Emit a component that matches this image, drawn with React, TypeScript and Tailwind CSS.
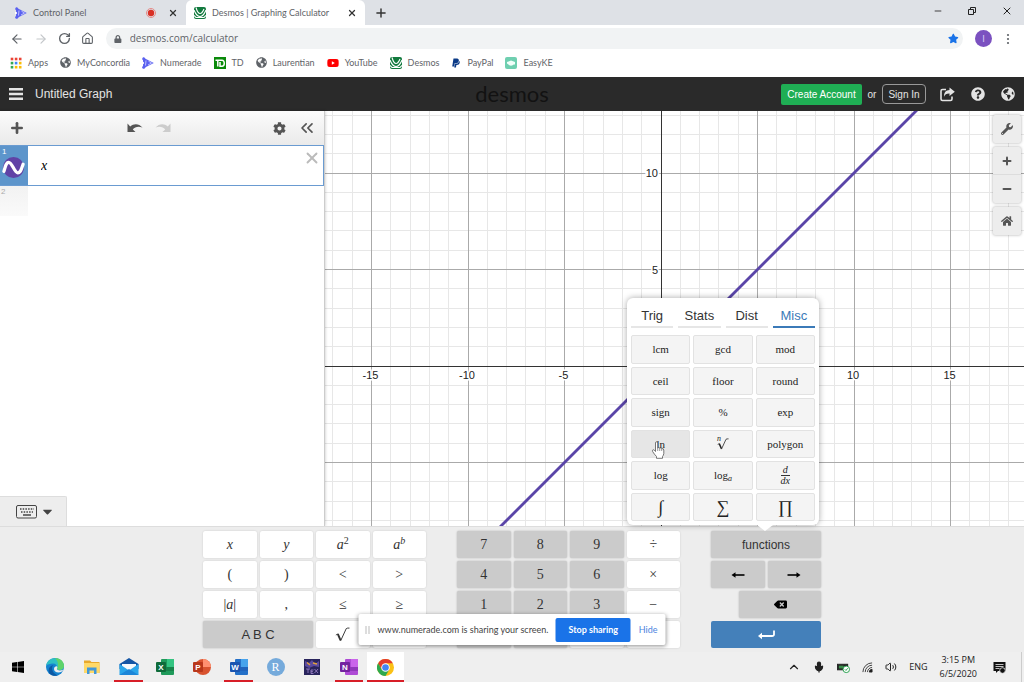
import type { ReactNode } from "react";
import { ArrowLeft, ArrowRight, ChevronUp, ChevronsLeft, Home, Mic, Minus, Plus, RotateCw, Volume2, X } from "lucide-react";
import { FaBackspace, FaCaretDown, FaCog, FaGlobeAmericas, FaHome, FaLock, FaPaypal, FaQuestionCircle, FaStar, FaWrench, FaYoutube } from "react-icons/fa";

const uiFont = "font-['Lato',sans-serif]";
const addressFont = "font-['Open_Sans',sans-serif]";
const sansFont = "font-['Liberation_Sans',sans-serif]";
const serifFont = "font-['Liberation_Serif',serif]";

const lightKey = "flex items-center justify-center rounded-xs bg-white text-[#333] shadow-[0_0_2px_rgba(0,0,0,0.15)]";
const darkKey = "flex items-center justify-center rounded-xs bg-[#cbcbcb] text-[#333] shadow-[0_0_2px_rgba(0,0,0,0.25)]";
const toolButton = "flex h-7 w-7 items-center justify-center text-[#555]";

function NumeradeIcon() {
  return (
    <svg className="h-3 w-3" viewBox="0 0 12 12" aria-hidden="true">
      <path d="M1 0.500 11.800 6 1 11.500z" fill="#5b62f0" />
      <path d="M4 3.500 3.500 8.500M6.500 4.200 9.500 6 6 8" fill="none" stroke="#d5d7ff" strokeWidth="0.800" />
      <circle cx="1.700" cy="1.700" r="1.500" fill="#5b62f0" />
      <circle cx="1.700" cy="10.300" r="1.500" fill="#5b62f0" />
      <circle cx="0.800" cy="6" r="1.200" fill="#fff" />
    </svg>
  );
}

function DesmosIcon() {
  return (
    <svg className="h-3 w-3" viewBox="0 0 12 12" aria-hidden="true">
      <rect width="12" height="12" rx="2" fill="#127a3e" />
      <path d="M0 3C1.500 7 3 9.500 6 9.500S10.500 7 12 3M2 0.500C3 4 4 6.500 6 6.500S9 4.500 10 2M0 8.500 2 10.500H10L12 8.500" fill="none" stroke="#fff" strokeWidth="1.100" />
    </svg>
  );
}

function AppsIcon() {
  const colors = ["#ea4335", "#ea4335", "#ea4335", "#34a853", "#4285f4", "#fbbc05", "#34a853", "#fbbc05", "#fbbc05"];
  return (
    <svg className="h-3 w-3" viewBox="0 0 12 12" aria-hidden="true">
      {colors.map((color, i) => (
        <rect key={i} x={0.7 + (i % 3) * 4.1} y={0.7 + Math.floor(i / 3) * 4.1} width="2.6" height="2.6" fill={color} />
      ))}
    </svg>
  );
}

function TdIcon() {
  return (
    <svg className="h-3 w-3" viewBox="0 0 12 12" aria-hidden="true">
      <rect width="12" height="12" fill="#0a8a0a" />
      <path d="M1.500 3.200H6.500M3.800 3.200V9.500M6 5V9.200H8C11 9.200 11 3.200 8 3.200H6.500" fill="none" stroke="#fff" strokeWidth="1.500" />
    </svg>
  );
}

function EasyIcon() {
  return (
    <svg className="h-3 w-3" viewBox="0 0 12 12" aria-hidden="true">
      <rect width="12" height="12" rx="2" fill="#6fcfb0" />
      <path d="M2 5 6 3.500 10 5V7.500H8.500C8 9 4 9 3.500 7.500L2 6.500z" fill="#f2fffa" />
    </svg>
  );
}

const bookmarks: { label: string; icon: ReactNode }[] = [
  { label: "Apps", icon: <AppsIcon /> },
  { label: "MyConcordia", icon: <FaGlobeAmericas className="h-[11px] w-[11px] text-[#5f6368]" /> },
  { label: "Numerade", icon: <NumeradeIcon /> },
  { label: "TD", icon: <TdIcon /> },
  { label: "Laurentian", icon: <FaGlobeAmericas className="h-[11px] w-[11px] text-[#5f6368]" /> },
  { label: "YouTube", icon: <FaYoutube className="h-3 w-3 text-[#f00]" /> },
  { label: "Desmos", icon: <DesmosIcon /> },
  { label: "PayPal", icon: <FaPaypal className="h-[10px] w-[10px] text-[#0b3a86]" /> },
  { label: "EasyKE", icon: <EasyIcon /> },
];

function BrowserChrome() {
  return (
    <div className={`${uiFont} shrink-0 bg-white text-[9px] text-[#5f6368]`}>
      <div className="flex h-[25px] items-stretch bg-[#dee1e6]">
        <div className="flex w-[186px] items-center pl-[15px] pr-2">
          <NumeradeIcon />
          <button type="button" className="ml-[6px]">Control Panel</button>
          <svg className="ml-auto mr-3 h-[10px] w-[10px]" viewBox="0 0 10 10" aria-hidden="true">
            <circle cx="5" cy="5" r="4.500" fill="none" stroke="#e58b88" />
            <circle cx="5" cy="5" r="3.200" fill="#d93025" />
          </svg>
          <button type="button" aria-label="Close Control Panel"><X className="h-[10px] w-[10px] text-[#333]" strokeWidth={3} /></button>
        </div>
        <div className="flex w-[179px] items-center rounded-t-md bg-white pl-2 pr-2">
          <DesmosIcon />
          <button type="button" className="ml-[6px] whitespace-nowrap">Desmos | Graphing Calculator</button>
          <button type="button" className="ml-auto" aria-label="Close Desmos"><X className="h-[10px] w-[10px] text-[#333]" strokeWidth={3} /></button>
        </div>
        <button type="button" className="ml-[9px]" aria-label="New tab"><Plus className="h-[14px] w-[14px] text-[#333]" strokeWidth={2.5} /></button>
        <div className="ml-auto flex items-center gap-6 pb-1 pr-[11px] text-[#222]">
          <button type="button" aria-label="Minimize"><Minus className="h-[10px] w-[10px]" /></button>
          <button type="button" aria-label="Restore">
            <svg className="h-[10px] w-[10px]" viewBox="0 0 10 10" fill="none" stroke="currentColor">
              <path d="M1.500 3.500h5v5h-5zM3.500 3.500V1.500h5v5h-2" />
            </svg>
          </button>
          <button type="button" aria-label="Close window"><X className="h-3 w-3" strokeWidth={2} /></button>
        </div>
      </div>

      <div className="flex h-[27px] items-center gap-3 pl-[10px] pr-3">
        <div className="flex items-center gap-[10px]">
          <button type="button" aria-label="Back"><ArrowLeft className="h-[14px] w-[14px]" /></button>
          <button type="button" aria-label="Forward"><ArrowRight className="h-[14px] w-[14px] text-[#c4c7ca]" /></button>
          <button type="button" aria-label="Reload"><RotateCw className="h-[13px] w-[13px]" strokeWidth={2.5} /></button>
          <button type="button" aria-label="Home"><Home className="h-[13px] w-[13px]" /></button>
        </div>
        <div className="flex h-[21px] grow items-center rounded-full bg-[#f1f3f4] pl-2 pr-1">
          <FaLock className="h-2 w-2" />
          <input
            aria-label="Address"
            className={`${addressFont} ml-2 w-full bg-transparent text-[10px] text-[#5f6368] outline-none`}
            defaultValue="desmos.com/calculator"
          />
          <FaStar className="h-[11px] w-[11px] text-[#1a73e8]" />
        </div>
        <button type="button" className="flex h-[17px] w-[17px] items-center justify-center rounded-full bg-[#7b51c0] text-[#d9c9f2]">I</button>
        <button type="button" aria-label="Menu">
          <svg className="h-3 w-2" viewBox="0 0 8 12" fill="currentColor">
            <circle cx="4" cy="2" r="1.100" />
            <circle cx="4" cy="6" r="1.100" />
            <circle cx="4" cy="10" r="1.100" />
          </svg>
        </button>
      </div>

      <nav className="flex h-[25px] items-center gap-3 pb-1 pl-[10px]">
        {bookmarks.map((item) => (
          <a key={item.label} href="#" className="flex items-center gap-[6px]">
            {item.icon}
            {item.label}
          </a>
        ))}
      </nav>
    </div>
  );
}

function ShareIcon() {
  return (
    <svg className="h-[15px] w-[15px]" viewBox="0 0 15 15" aria-hidden="true">
      <path d="M6 2.500H2.500Q1 2.500 1 4V12Q1 13.500 2.500 13.500H10.500Q12 13.500 12 12V9.500" fill="none" stroke="currentColor" strokeWidth="1.600" />
      <path d="M9.500 0.500 14.800 4.700 9.500 8.900V6.400C6.500 6.300 5 7.300 4 9.800 3.800 5.500 6 3.100 9.500 3z" fill="currentColor" />
    </svg>
  );
}

function DesmosHeader() {
  return (
    <header className={`${sansFont} flex h-[34px] shrink-0 items-center bg-[#2a2a2a] text-[10px] text-[#e4e4e4]`}>
      <div className="flex flex-1 items-center gap-3 pl-[9px]">
        <button type="button" aria-label="Menu">
          <svg className="h-3 w-[14px]" viewBox="0 0 14 12" fill="currentColor">
            <path d="M0 0H14V2.400H0zM0 4.800H14V7.200H0zM0 9.600H14V12H0z" />
          </svg>
        </button>
        <h1 className="text-[12px]">Untitled Graph</h1>
      </div>
      <div className="font-['Lato',sans-serif] text-[22px] leading-none text-[#121212]">desmos</div>
      <div className="flex flex-1 items-center justify-end pr-[9px]">
        <button type="button" className="h-[21px] w-[81px] rounded-xs bg-[#1fae54] text-white">Create Account</button>
        <span className="w-5 text-center">or</span>
        <button type="button" className="h-5 w-[44px] rounded-sm border border-[#999]">Sign In</button>
        <div className="ml-[14px] flex items-center gap-4">
          <button type="button" aria-label="Share"><ShareIcon /></button>
          <button type="button" aria-label="Help"><FaQuestionCircle className="h-[14px] w-[14px]" /></button>
          <button type="button" aria-label="Language"><FaGlobeAmericas className="h-[14px] w-[14px]" /></button>
        </div>
      </div>
    </header>
  );
}

function CurvedArrow({ className }: { className: string }) {
  return (
    <svg className={className} viewBox="0 0 16 10" fill="currentColor" aria-hidden="true">
      <path d="M0.500 0.500V9H8.500L5.800 6.400C8 4 11 3 15.500 4.500 12 0.500 7 0 3.200 3.500z" />
    </svg>
  );
}

function ExpressionPanel() {
  return (
    <aside className="z-10 flex w-[325px] shrink-0 flex-col border-r border-[#ccc] bg-white shadow-[0_0_3px_rgba(0,0,0,0.25)]">
      <div className="flex h-[34px] items-center bg-linear-to-b from-[#fcfcfc] to-[#eaeaea] pl-[9px] pr-[7px] text-[#555]">
        <button type="button" aria-label="Add item"><Plus className="h-4 w-4" strokeWidth={4} /></button>
        <div className="ml-auto flex gap-3">
          <button type="button" aria-label="Undo"><CurvedArrow className="h-[10px] w-4" /></button>
          <button type="button" aria-label="Redo"><CurvedArrow className="h-[10px] w-4 -scale-x-100 text-[#ccc]" /></button>
        </div>
        <div className="ml-auto flex items-center gap-[11px]">
          <button type="button" aria-label="Edit list"><FaCog className="h-[13px] w-[13px]" /></button>
          <button type="button" aria-label="Hide list"><ChevronsLeft className="h-5 w-5" /></button>
        </div>
      </div>

      <div className="flex h-[41px] border border-l-0 border-[#6a9bd1]">
        <div className={`${sansFont} w-7 shrink-0 bg-[#5d95cb] pl-[2px] pt-px text-[8px] leading-[10px] text-white`}>
          1
          <button type="button" className="block" aria-label="Hide curve">
            <svg className="h-[23px] w-[23px]" viewBox="0 0 24 24">
              <circle cx="12" cy="11" r="11" fill="#6042a6" />
              <path d="M2 15C3.500 9.500 4.500 5.500 7 5.500 10.500 5.500 13 16.500 16.500 16.500 19.500 16.500 20.500 12 22 7.500" fill="none" stroke="#fff" strokeWidth="3.400" strokeLinecap="round" />
            </svg>
          </button>
        </div>
        <input aria-label="Expression 1" className={`${serifFont} min-w-0 grow pl-[13px] text-[14px] italic text-black outline-none`} defaultValue="x" />
        <button type="button" className="self-start pr-[2px] pt-[3px]" aria-label="Delete expression">
          <X className="h-[18px] w-[18px] text-[#bbb]" strokeWidth={2.5} />
        </button>
      </div>
      <div className={`${sansFont} h-[30px] w-7 bg-linear-to-b from-[#f2f2f2] to-[#fafafa] pl-px pt-px text-[8px] leading-[10px] text-[#aaa]`}>2</div>

      <button
        type="button"
        className="mt-auto flex h-[30px] w-[67px] items-center justify-center gap-[3px] rounded-tr-xs border-r border-t border-[#ddd] bg-[#ededed] pl-1 text-[#444]"
        aria-label="Toggle keypad"
      >
        <svg className="h-[14px] w-[21px]" viewBox="0 0 21 14" fill="none" stroke="currentColor" aria-hidden="true">
          <rect x="0.500" y="0.500" width="20" height="12.500" rx="1.500" />
          <path d="M4 4H18M5 7H17" strokeWidth="1.500" strokeDasharray="1.500 1.200" />
          <path d="M7 10H15" strokeWidth="1.500" />
        </svg>
        <FaCaretDown className="h-[15px] w-[15px]" />
      </button>
    </aside>
  );
}

const originX = 336;
const originY = 255;
const unit = 19.3;

function GraphPaper() {
  const steps = Array.from({ length: 81 }, (_, i) => i - 40);
  const lineColor = (n: number) => (n === 0 ? "#333" : n % 5 === 0 ? "#aaa" : "#e7e7e7");
  const ordered = [...steps.filter((n) => n % 5 !== 0), ...steps.filter((n) => n % 5 === 0 && n !== 0), 0];

  return (
    <svg className="h-full w-full" viewBox="0 0 699 415" preserveAspectRatio="xMidYMid slice" role="img" aria-label="Graph of y = x">
      <g shapeRendering="crispEdges">
        {ordered.map((n) => (
          <g key={n} stroke={lineColor(n)}>
            <line x1={originX + n * unit} x2={originX + n * unit} y1="-500" y2="1000" />
            <line y1={originY - n * unit} y2={originY - n * unit} x1="-500" x2="1300" />
          </g>
        ))}
      </g>
      <line x1={originX - 40 * unit} y1={originY + 40 * unit} x2={originX + 40 * unit} y2={originY - 40 * unit} stroke="#5a45a8" strokeWidth="2.800" />
      <g className={`${sansFont} text-[11px]`} fill="#222" stroke="#fff" strokeWidth="3" paintOrder="stroke" textAnchor="middle">
        {[-15, -10, -5, 10, 15].map((n) => (
          <text key={n} x={originX + n * unit - 1} y={originY + 13}>{n}</text>
        ))}
        {[5, 10].map((n) => (
          <text key={n} x={originX - 3} y={originY - n * unit + 4} textAnchor="end">{n}</text>
        ))}
      </g>
    </svg>
  );
}

function GraphArea() {
  return (
    <main className="relative min-w-0 flex-1 overflow-hidden bg-white">
      <div className="absolute inset-0">
        <GraphPaper />
      </div>
      <div className="absolute right-[3px] top-1 flex flex-col gap-1 *:rounded-xs *:bg-[#ededed] *:shadow-[0_0_3px_rgba(0,0,0,0.35)]">
        <div><button type="button" className={toolButton} aria-label="Graph settings"><FaWrench className="h-3 w-3" /></button></div>
        <div className="divide-y divide-[#ddd]">
          <button type="button" className={toolButton} aria-label="Zoom in"><Plus className="h-3 w-3" strokeWidth={4} /></button>
          <button type="button" className={toolButton} aria-label="Zoom out"><Minus className="h-3 w-3" strokeWidth={4} /></button>
        </div>
        <div><button type="button" className={toolButton} aria-label="Default viewport"><FaHome className="h-3 w-3" /></button></div>
      </div>
    </main>
  );
}

function Radical({ className }: { className: string }) {
  return (
    <svg className={className} viewBox="0 0 14 14" fill="none" stroke="currentColor" strokeLinejoin="round" aria-hidden="true">
      <path d="M0.800 7.500 2.600 6.500" strokeWidth="0.800" />
      <path d="M2.600 6.500 5.200 12.500" strokeWidth="1.800" />
      <path d="M5.200 13 10.500 1.500Q11.500 0.800 13.500 1" strokeWidth="0.900" />
    </svg>
  );
}

const miscFunctions: { name: string; label: ReactNode }[] = [
  { name: "lcm", label: "lcm" },
  { name: "gcd", label: "gcd" },
  { name: "mod", label: "mod" },
  { name: "ceil", label: "ceil" },
  { name: "floor", label: "floor" },
  { name: "round", label: "round" },
  { name: "sign", label: "sign" },
  { name: "percent", label: "%" },
  { name: "exp", label: "exp" },
  { name: "ln", label: "ln" },
  {
    name: "nth root",
    label: (
      <span className="flex items-start">
        <span className="-mr-1 -mt-1 text-[8px] italic leading-[10px]">n</span>
        <Radical className="h-3 w-3" />
      </span>
    ),
  },
  { name: "polygon", label: "polygon" },
  { name: "log", label: "log" },
  { name: "log base a", label: <span>log<sub className="text-[8px] italic">a</sub></span> },
  {
    name: "derivative",
    label: (
      <span className="flex flex-col items-center text-[10px] italic leading-[10px]">
        <span className="border-b border-[#333] px-[2px]">d</span>
        <span>dx</span>
      </span>
    ),
  },
  { name: "integral", label: <span className="text-[18px] leading-none">∫</span> },
  { name: "sum", label: <span className="text-[18px] leading-none">∑</span> },
  { name: "product", label: <span className="text-[18px] leading-none">∏</span> },
];

function HandCursor() {
  return (
    <svg className="absolute left-[19px] top-[10px] h-[18px] w-[15px]" viewBox="0 0 15 18" aria-hidden="true">
      <path
        d="M4.500 10.500V2Q4.500 0.800 5.600 0.800T6.700 2V7Q7.700 6 8.700 7.200 9.800 6.400 10.700 7.700 12.500 7 12.800 9V12.500Q12.500 14.500 11.500 15.500V17.300H5.500V15.500Q3.500 13.500 1.600 10.500 1 9 2.200 8.700 3.300 8.700 4.500 10.500z"
        fill="#fff"
        stroke="#555"
        strokeWidth="0.800"
      />
      <path d="M6.700 7V10M8.700 7.500V10M10.700 8V10" stroke="#555" strokeWidth="0.600" />
    </svg>
  );
}

function FunctionsPopup() {
  return (
    <div className="absolute bottom-full right-[2px] z-20 mb-[6px] w-[192px] rounded-md bg-white px-1 pb-1 shadow-[0_0_6px_rgba(0,0,0,0.35)]">
      <div className={`${sansFont} grid grid-cols-4 gap-[5px] pt-1 text-[13px] text-[#333]`} role="tablist">
        {["Trig", "Stats", "Dist", "Misc"].map((tab) => (
          <button
            key={tab}
            type="button"
            role="tab"
            aria-selected={tab === "Misc"}
            className="h-[26px] border-b-2 border-[#e6e6e6] pt-[2px] leading-none aria-selected:border-[#3b7ab8] aria-selected:text-[#3b7ab8]"
          >
            {tab}
          </button>
        ))}
      </div>
      <div className={`${serifFont} mt-[7px] grid h-[186px] grid-cols-3 grid-rows-6 gap-[3px] text-[11px] text-[#222]`}>
        {miscFunctions.map((item) => (
          <button
            key={item.name}
            type="button"
            aria-label={item.name}
            className={`relative flex min-h-0 items-center justify-center rounded-xs border border-[#e2e2e2] ${item.name === "ln" ? "bg-[#e6e6e6]" : "bg-[#f4f4f4]"}`}
          >
            {item.label}
            {item.name === "ln" && <HandCursor />}
          </button>
        ))}
      </div>
      <svg className="absolute right-[46px] top-full h-[6px] w-4" viewBox="0 0 16 6" aria-hidden="true">
        <path d="M0 0H16L8 6z" fill="#fff" />
      </svg>
    </div>
  );
}

const leftKeys: { name: string; label: ReactNode }[] = [
  { name: "x", label: <i>x</i> },
  { name: "y", label: <i>y</i> },
  { name: "a squared", label: <span><i>a</i><sup className="text-[10px]">2</sup></span> },
  { name: "a to the b", label: <i>a<sup className="text-[10px]">b</sup></i> },
  { name: "left parenthesis", label: "(" },
  { name: "right parenthesis", label: ")" },
  { name: "less than", label: "<" },
  { name: "greater than", label: ">" },
  { name: "absolute value", label: <span>|<i>a</i>|</span> },
  { name: "comma", label: "," },
  { name: "less than or equal", label: "≤" },
  { name: "greater than or equal", label: "≥" },
];

const numberKeys = ["7", "8", "9", "÷", "4", "5", "6", "×", "1", "2", "3", "−"];

function KeyArrow({ flip }: { flip?: boolean }) {
  return (
    <svg className={`h-2 w-[14px] ${flip ? "-scale-x-100" : ""}`} viewBox="0 0 14 8" aria-hidden="true">
      <path d="M3 4H13.500" stroke="#000" strokeWidth="1.600" />
      <path d="M0.500 4 4.500 1.300V6.700z" fill="#000" />
    </svg>
  );
}

function Keypad() {
  return (
    <section className="relative z-10 flex shrink-0 justify-center gap-[31px] border-t border-[#ddd] bg-[#ededed] pb-1 pt-1">
      <div className={`${serifFont} grid w-[223px] auto-rows-[27px] grid-cols-4 gap-[3px] text-[14px]`}>
        {leftKeys.map((key) => (
          <button key={key.name} type="button" className={lightKey} aria-label={key.name}>{key.label}</button>
        ))}
        <button type="button" className={`${darkKey} ${sansFont} col-span-2 text-[13px]`}>A B C</button>
        <button type="button" className={lightKey} aria-label="square root"><Radical className="h-[15px] w-[15px]" /></button>
        <button type="button" className={lightKey} aria-label="pi" />
      </div>
      <div className={`${serifFont} grid w-[223px] auto-rows-[27px] grid-cols-4 gap-[3px] text-[14px]`}>
        {numberKeys.map((key, i) => (
          <button key={key} type="button" className={i % 4 === 3 ? lightKey : darkKey}>{key}</button>
        ))}
        <button type="button" className={darkKey} aria-label="0" />
        <button type="button" className={darkKey} aria-label="decimal point" />
        <button type="button" className={lightKey} aria-label="equals" />
        <button type="button" className={lightKey} aria-label="plus" />
      </div>
      <div className={`${sansFont} relative grid w-[110px] auto-rows-[27px] grid-cols-4 gap-[3px] text-[12px]`}>
        <button type="button" className={`${darkKey} col-span-4`}>functions</button>
        <button type="button" className={`${darkKey} col-span-2`} aria-label="Left"><KeyArrow /></button>
        <button type="button" className={`${darkKey} col-span-2`} aria-label="Right"><KeyArrow flip /></button>
        <button type="button" className={`${darkKey} col-span-3 col-start-2`} aria-label="Backspace">
          <FaBackspace className="h-[13px] w-[13px] text-black" />
        </button>
        <button type="button" className="col-span-4 flex items-center justify-center rounded-xs bg-[#4480ba]" aria-label="Enter">
          <svg className="h-[10px] w-[18px]" viewBox="0 0 18 10" fill="none" stroke="#fff" strokeWidth="1.800" aria-hidden="true">
            <path d="M17 0.500V4.500Q17 6 15 6H3" />
            <path d="M5 2.800 1 6 5 9.200z" fill="#fff" stroke="none" />
          </svg>
        </button>
        <FunctionsPopup />
      </div>

      <div className={`${uiFont} absolute bottom-[7px] left-1/2 flex h-[31px] w-[307px] -translate-x-1/2 items-center rounded-xs bg-white pl-[7px] pr-2 text-[9px] text-[#444] shadow-[0_1px_4px_rgba(0,0,0,0.45)]`}>
        <span className="h-2 w-1 shrink-0 border-x border-[#bbb]" />
        <span className="ml-2 whitespace-nowrap">www.numerade.com is sharing your screen.</span>
        <button type="button" className="ml-auto h-6 w-[75px] shrink-0 whitespace-nowrap rounded-xs bg-[#1a73e8] font-bold text-white">Stop sharing</button>
        <button type="button" className="ml-2 text-[#4c83e0]">Hide</button>
      </div>
    </section>
  );
}

function OfficeIcon({ letter, dark, mid, light }: { letter: string; dark: string; mid: string; light: string }) {
  return (
    <svg className="h-[18px] w-[18px]" viewBox="0 0 18 18" aria-hidden="true">
      <rect x="5" y="1" width="13" height="16" rx="1" fill={mid} />
      <path d="M11 1H17Q18 1 18 2V9H11z" fill={light} />
      <path d="M5 9H18V13H5z" fill={dark} opacity="0.5" />
      <rect y="4" width="10" height="10" rx="1" fill={dark} />
      <text x="5" y="12" fill="#fff" textAnchor="middle" className={`${sansFont} text-[8px] font-bold`}>{letter}</text>
    </svg>
  );
}

const taskbarApps: { name: string; open?: boolean; active?: boolean; icon: ReactNode }[] = [
  {
    name: "Start",
    icon: (
      <svg className="h-3 w-3" viewBox="0 0 12 12" aria-hidden="true">
        <path d="M0 1.700 5 1V5.700H0zM5.600 0.900 12 0V5.700H5.600zM0 6.300H5V11L0 10.300zM5.600 6.300H12V12L5.600 11.100z" />
      </svg>
    ),
  },
  {
    name: "Edge",
    icon: (
      <svg className="h-[18px] w-[18px]" viewBox="0 0 18 18" aria-hidden="true">
        <circle cx="9" cy="9" r="9" fill="#1583d0" />
        <path d="M0.300 7.500C1.500-2 16-2.500 18 8 18 12 13 13 11 11 12 8 10 5.500 7 5.500 4 5.500 1.500 6.500 0.300 7.500z" fill="#2fbfc4" />
        <path d="M9 0C15 0 18 4 18 8 18 12 13 13 11 11 13 7 12 3 9 0z" fill="#5fd36a" />
        <path d="M11 8.500C10 8 8 9 8 11 8 14 12 15.500 16 13.500L17.500 11.500C14 13 11.500 12.500 10.800 11 11.500 10 11.500 9 11 8.500z" fill="#ededed" />
        <path d="M6.500 8C5 12 8 16 12 17.300 9 18.500 5.500 17.500 3.500 15.500 1.500 12 3 8 7.500 7z" fill="#0c59a4" />
      </svg>
    ),
  },
  {
    name: "File Explorer",
    icon: (
      <svg className="h-[18px] w-[18px]" viewBox="0 0 18 18" aria-hidden="true">
        <path d="M1 2.500H7L8.500 4H16.500V15H1z" fill="#e8a92c" />
        <path d="M1 5H16.500V15H1z" fill="#ffd968" />
        <path d="M4 9.500H13.500V16H11V12.500H6.500V16H4z" fill="#4298d8" />
      </svg>
    ),
  },
  {
    name: "Mail",
    open: true,
    icon: (
      <svg className="h-5 w-5" viewBox="0 0 20 20" aria-hidden="true">
        <path d="M0.500 7 10 1 19.500 7V12H0.500z" fill="#1455a5" />
        <path d="M3 7H17V13H3z" fill="#f4f8fc" />
        <path d="M0.500 7 10 13.500 19.500 7V18H0.500z" fill="#2aa5ea" />
        <path d="M0.500 18 10 12 19.500 18z" fill="#1c86d8" />
      </svg>
    ),
  },
  { name: "Excel", icon: <OfficeIcon letter="X" dark="#0f6b3a" mid="#1f9a5a" light="#34c481" /> },
  {
    name: "PowerPoint",
    icon: (
      <svg className="h-[18px] w-[18px]" viewBox="0 0 18 18" aria-hidden="true">
        <circle cx="10" cy="9" r="8" fill="#d9532f" />
        <path d="M10 1A8 8 0 0 1 18 9H10z" fill="#ff9070" />
        <rect y="4" width="10" height="10" rx="1" fill="#b9371b" />
        <text x="5" y="12" fill="#fff" textAnchor="middle" className={`${sansFont} text-[8px] font-bold`}>P</text>
      </svg>
    ),
  },
  { name: "Word", open: true, icon: <OfficeIcon letter="W" dark="#1b55b0" mid="#2470c8" light="#46a3ec" /> },
  {
    name: "R",
    icon: <span className={`${serifFont} flex h-[18px] w-[18px] items-center justify-center rounded-full bg-[#75aadb] text-[12px] text-white`}>R</span>,
  },
  {
    name: "TeXworks",
    icon: (
      <svg className="h-4 w-4" viewBox="0 0 16 16" aria-hidden="true">
        <rect width="16" height="16" fill="#29245c" />
        <path d="M1 2 5 4 8 1 11 5 15 2V8L10 7 5 9 1 7z" fill="#5a4aa0" />
        <path d="M3 3.500 6 6M9 4 13 5" stroke="#e0a03c" strokeWidth="1.500" />
        <path d="M2 10H6M4 10V14M7 11H9.500M7 11V14.500H9.500M7 12.700H9M10.500 10 14 14M14 10 10.500 14" stroke="#a58ad0" strokeWidth="0.800" fill="none" />
      </svg>
    ),
  },
  { name: "OneNote", open: true, icon: <OfficeIcon letter="N" dark="#7423a0" mid="#ae4bd5" light="#ca64ea" /> },
  {
    name: "Chrome",
    open: true,
    active: true,
    icon: (
      <svg className="h-[17px] w-[17px]" viewBox="0 0 16 16" aria-hidden="true">
        <circle cx="8" cy="8" r="8" fill="#fbc116" />
        <path d="M1.070 4A8 8 0 0 1 14.930 4H8L4.540 10z" fill="#e33b2e" />
        <path d="M1.070 4A8 8 0 0 0 8 16L11.460 10H4.540z" fill="#2da94f" />
        <circle cx="8" cy="8" r="4" fill="#fff" />
        <circle cx="8" cy="8" r="3.100" fill="#4285f4" />
      </svg>
    ),
  },
];

function Taskbar() {
  return (
    <footer className={`${uiFont} flex h-[30px] shrink-0 items-stretch bg-[#efefef] text-[9px] text-[#222]`}>
      <div className="flex w-[404px]">
        {taskbarApps.map((app) => (
          <button
            key={app.name}
            type="button"
            aria-label={app.name}
            className={`relative flex flex-1 items-center justify-center ${app.active ? "bg-white" : ""}`}
          >
            {app.icon}
            {app.open && <span className={`absolute bottom-0 h-[2px] bg-[#d81e28] ${app.active ? "inset-x-0" : "inset-x-1"}`} />}
          </button>
        ))}
      </div>
      <div className="mr-[2px] ml-auto flex items-center gap-3 border-r border-[#ccc] pr-[15px]">
        <ChevronUp className="h-[14px] w-[14px]" />
        <Mic className="h-3 w-3" fill="currentColor" strokeWidth={2.5} />
        <svg className="h-[13px] w-[13px]" viewBox="0 0 14 14" aria-hidden="true">
          <rect x="0.500" y="3.500" width="11" height="6" fill="#222" stroke="#222" />
          <rect x="2" y="5" width="5" height="3" fill="#3b8f4b" />
          <circle cx="10" cy="9" r="3.500" fill="#fff" stroke="#21a04a" />
          <path d="M8.500 9 9.700 10.200 11.500 7.800" fill="none" stroke="#21a04a" />
        </svg>
        <svg className="h-[11px] w-[11px]" viewBox="0 0 12 12" fill="none" stroke="currentColor" strokeWidth="0.900" aria-hidden="true">
          <path d="M1 11A10 10 0 0 1 11 1M3.500 11A7.500 7.500 0 0 1 11 3.500M6 11A5 5 0 0 1 11 6" />
          <path d="M8 11A3 3 0 0 1 11 8V11z" fill="currentColor" />
        </svg>
        <Volume2 className="h-3 w-3" strokeWidth={2} />
        <span className={addressFont}>ENG</span>
        <div className={`${addressFont} text-center leading-[14px]`}>
          <div>3:15 PM</div>
          <div>6/5/2020</div>
        </div>
        <svg className="ml-1 h-[13px] w-[13px]" viewBox="0 0 13 13" aria-hidden="true">
          <path d="M0.500 1H12.500V10H5L3 12V10H0.500z" fill="#111" />
          <path d="M2.500 3.500H10.500M2.500 5.500H10.500M2.500 7.500H6.500" stroke="#efefef" strokeWidth="0.800" />
          <circle cx="9.500" cy="9.500" r="2.800" fill="#111" stroke="#efefef" strokeWidth="0.800" />
        </svg>
      </div>
    </footer>
  );
}

export default function App() {
  return (
    <div className="flex h-screen min-h-[500px] flex-col overflow-hidden">
      <BrowserChrome />
      <DesmosHeader />
      <div className="flex min-h-0 flex-1">
        <ExpressionPanel />
        <GraphArea />
      </div>
      <Keypad />
      <Taskbar />
    </div>
  );
}
